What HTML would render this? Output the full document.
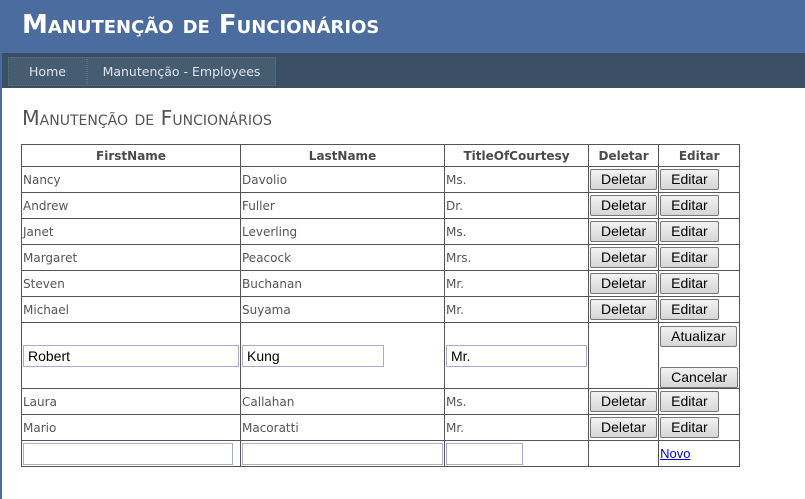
<!DOCTYPE html>
<html><head><meta charset="utf-8"><style>
*{margin:0;padding:0;box-sizing:border-box}
body{width:805px;height:499px;background:#fff;font-family:"DejaVu Sans","Liberation Sans",sans-serif;position:relative;overflow:hidden}
#lb{position:absolute;left:0;top:0;width:2px;height:499px;background:#4b6c9e}
#hdr{position:absolute;left:0;top:0;width:805px;height:53px;background:#4b6c9e}
#hdr h1{position:absolute;left:22px;top:10px;color:#fff;font-size:26px;font-weight:bold;font-variant:small-caps;white-space:nowrap}
#nav{position:absolute;left:0;top:53px;width:805px;height:35px;background:#3a4f63}
.tab{position:absolute;top:4px;height:29px;background:#465c71;border:1px dotted #5a7088;color:#dde4ec;font-size:12.5px;line-height:27px;text-align:center}
h2{position:absolute;left:22px;top:106px;font-size:20.5px;font-weight:normal;font-variant:small-caps;color:#555;white-space:nowrap}
table{position:absolute;left:21px;top:144px;border-collapse:collapse;width:719px}
td,th{border:1px solid #555;font-size:12px;color:#555;padding:0 1px;text-align:left}
th{font-weight:bold;text-align:center;height:22px;color:#4a4a4a}
td{height:26px}
td.b{padding:0 1px}
.btn{display:inline-block;font-family:"Liberation Sans",sans-serif;font-size:14px;color:#000;background:linear-gradient(#f2f2f2,#d6d6d6);border:1px solid #777;border-radius:2px;height:21px;line-height:19px;padding:0 10px;vertical-align:middle}
.in{display:inline-block;border:1px solid #aac;height:22px;font-family:"Liberation Sans",sans-serif;font-size:14px;color:#000;line-height:20px;padding-left:4px;vertical-align:middle}
a{color:#00c;font-family:"Liberation Sans",sans-serif;font-size:13px;text-decoration:underline}
</style></head><body>
<div id="hdr"><h1>Manutenção de Funcionários</h1></div>
<div id="nav"><div class="tab" style="left:8px;width:79px">Home</div><div class="tab" style="left:87px;width:189px">Manutenção - Employees</div></div>
<div id="lb"></div>
<h2>Manutenção de Funcionários</h2>
<table>
<tr><th style="width:219px">FirstName</th><th style="width:204px">LastName</th><th style="width:145px">TitleOfCourtesy</th><th style="width:70px">Deletar</th><th>Editar</th></tr>
<tr><td>Nancy</td><td>Davolio</td><td>Ms.</td><td class="b"><span class="btn">Deletar</span></td><td class="b"><span class="btn">Editar</span></td></tr>
<tr><td>Andrew</td><td>Fuller</td><td>Dr.</td><td class="b"><span class="btn">Deletar</span></td><td class="b"><span class="btn">Editar</span></td></tr>
<tr><td>Janet</td><td>Leverling</td><td>Ms.</td><td class="b"><span class="btn">Deletar</span></td><td class="b"><span class="btn">Editar</span></td></tr>
<tr><td>Margaret</td><td>Peacock</td><td>Mrs.</td><td class="b"><span class="btn">Deletar</span></td><td class="b"><span class="btn">Editar</span></td></tr>
<tr><td>Steven</td><td>Buchanan</td><td>Mr.</td><td class="b"><span class="btn">Deletar</span></td><td class="b"><span class="btn">Editar</span></td></tr>
<tr><td>Michael</td><td>Suyama</td><td>Mr.</td><td class="b"><span class="btn">Deletar</span></td><td class="b"><span class="btn">Editar</span></td></tr>
<tr><td style="height:66px"><span class="in" style="width:216px">Robert</span></td><td><span class="in" style="width:142px">Kung</span></td><td><span class="in" style="width:141px">Mr.</span></td><td></td><td class="b" style="vertical-align:top;padding-top:3px"><span class="btn">Atualizar</span><div style="height:20px"></div><span class="btn">Cancelar</span></td></tr>
<tr><td>Laura</td><td>Callahan</td><td>Ms.</td><td class="b"><span class="btn">Deletar</span></td><td class="b"><span class="btn">Editar</span></td></tr>
<tr><td>Mario</td><td>Macoratti</td><td>Mr.</td><td class="b"><span class="btn">Deletar</span></td><td class="b"><span class="btn">Editar</span></td></tr>
<tr><td style="height:25px"><span class="in" style="width:210px"></span></td><td><span class="in" style="width:201px"></span></td><td><span class="in" style="width:77px"></span></td><td></td><td><a>Novo</a></td></tr>
</table>
</body></html>
